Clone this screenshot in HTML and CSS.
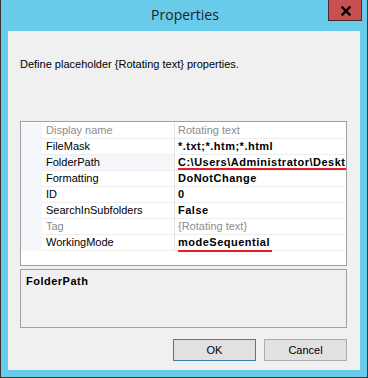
FILE: index.html
```html
<!DOCTYPE html>
<html>
<head>
<meta charset="utf-8">
<link rel="stylesheet" href="styles.css">
</head>
<body>
<div class="window">
  <div class="titlebar">
    <span class="title">Properties</span>
    <div class="close">
      <svg width="10" height="10" viewBox="0 0 10 10"><path d="M1.5 1.5 L8.5 8.5 M8.5 1.5 L1.5 8.5" stroke="#000" stroke-width="2.4" stroke-linecap="square"/></svg>
    </div>
  </div>
  <div class="client">
    <div class="intro">Define placeholder {Rotating text} properties.</div>
    <div class="grid">
      <div class="row"><div class="gut"></div><div class="name dim">Display name</div><div class="val dim">Rotating text</div></div>
      <div class="row"><div class="gut"></div><div class="name">FileMask</div><div class="val b">*.txt;*.htm;*.html</div></div>
      <div class="row sel"><div class="gut"></div><div class="name">FolderPath</div><div class="val b"><span class="mark full">C:\Users\Administrator\Deskt</span></div></div>
      <div class="row"><div class="gut"></div><div class="name">Formatting</div><div class="val b">DoNotChange</div></div>
      <div class="row"><div class="gut"></div><div class="name">ID</div><div class="val b">0</div></div>
      <div class="row"><div class="gut"></div><div class="name">SearchInSubfolders</div><div class="val b">False</div></div>
      <div class="row"><div class="gut"></div><div class="name dim">Tag</div><div class="val dim">{Rotating text}</div></div>
      <div class="row"><div class="gut"></div><div class="name">WorkingMode</div><div class="val b"><span class="mark">modeSequential</span></div></div>
    </div>
    <div class="desc"><div class="desc-title">FolderPath</div></div>
    <div class="buttons">
      <div class="btn default">OK</div>
      <div class="btn">Cancel</div>
    </div>
  </div>
</div>
</body>
</html>
```
FILE: styles.css
```css
html, body {
  margin: 0;
  padding: 0;
  background: #69cbea;
}
.window {
  width: 368px;
  height: 378px;
  box-sizing: border-box;
  background: #69cbea;
  border-left: 1px solid #333;
  border-right: 1px solid #333;
  border-bottom: 1px solid #333;
  padding: 0 7px 7px 7px;
  display: flex;
  flex-direction: column;
  position: relative;
}
.titlebar {
  height: 31px;
  display: flex;
  justify-content: center;
  align-items: flex-start;
}
.title {
  font-family: "Open Sans", "Noto Sans", sans-serif;
  font-size: 14px;
  color: #1e1e1e;
  margin-top: 5px;
  margin-left: 2px;
  line-height: 20px;
}
.close {
  position: absolute;
  left: 327px;
  top: 0;
  width: 34px;
  height: 21px;
  box-sizing: border-box;
  background: #c75050;
  border: 1px solid #4a2a2a;
  border-top: none;
  display: flex;
  align-items: center;
  justify-content: center;
}
.close svg { display: block; margin-left: 2px; margin-top: 1px; }
.client {
  height: 339px;
  background: #f0f0f0;
  box-sizing: border-box;
  padding: 0 13px 0 12px;
  display: flex;
  flex-direction: column;
  font-family: "Liberation Sans", Arial, sans-serif;
  font-size: 11px;
  color: #000;
}
.intro {
  margin-top: 27px;
  line-height: 13px;
  height: 13px;
}
.grid {
  margin-top: 50px;
  height: 145px;
  box-sizing: border-box;
  border: 1px solid #a0a0a0;
  background: #fff;
  padding-top: 1px;
  overflow: hidden;
}
.row {
  display: grid;
  grid-template-columns: 21px 133px minmax(0, 1fr);
  height: 16px;
}
.gut { background: #f5f7fa; }
.name, .val {
  border-bottom: 1px solid #eeeeee;
  line-height: 15px;
  white-space: nowrap;
  overflow: hidden;
  min-width: 0;
}
.name {
  padding-left: 4px;
  border-right: 1px solid #e4e4e4;
}
.sel .name { background: #f4f6fa; }
.val { padding-left: 3px; position: relative; overflow: visible; }
.dim { color: #8d8d8d; }
.b { font-weight: bold; letter-spacing: 0.5px; }
.mark {
  display: inline-block;
  position: relative;
  padding-right: 2px;
}
.mark.full {
  display: block;
  overflow: hidden;
  padding-right: 0;
}
.mark::after {
  content: "";
  position: absolute;
  left: 0;
  right: 0;
  bottom: -2px;
  height: 2px;
  background: #ec1c24;
}
.mark.full::after { bottom: 0; }
.desc {
  margin-top: 3px;
  height: 59px;
  box-sizing: border-box;
  border: 1px solid #a0a0a0;
  background: #f0f0f0;
  padding: 5px 0 0 5px;
}
.desc-title {
  font-weight: bold;
  letter-spacing: 0.5px;
  line-height: 13px;
}
.buttons {
  margin-top: 11px;
  display: flex;
  justify-content: flex-end;
  gap: 8px;
}
.btn {
  width: 83px;
  height: 22px;
  box-sizing: border-box;
  border: 1px solid #adadad;
  background: #e1e1e1;
  display: flex;
  align-items: center;
  justify-content: center;
  font-size: 11px;
}
.btn.default { border-color: #3c7fb1; }
```
